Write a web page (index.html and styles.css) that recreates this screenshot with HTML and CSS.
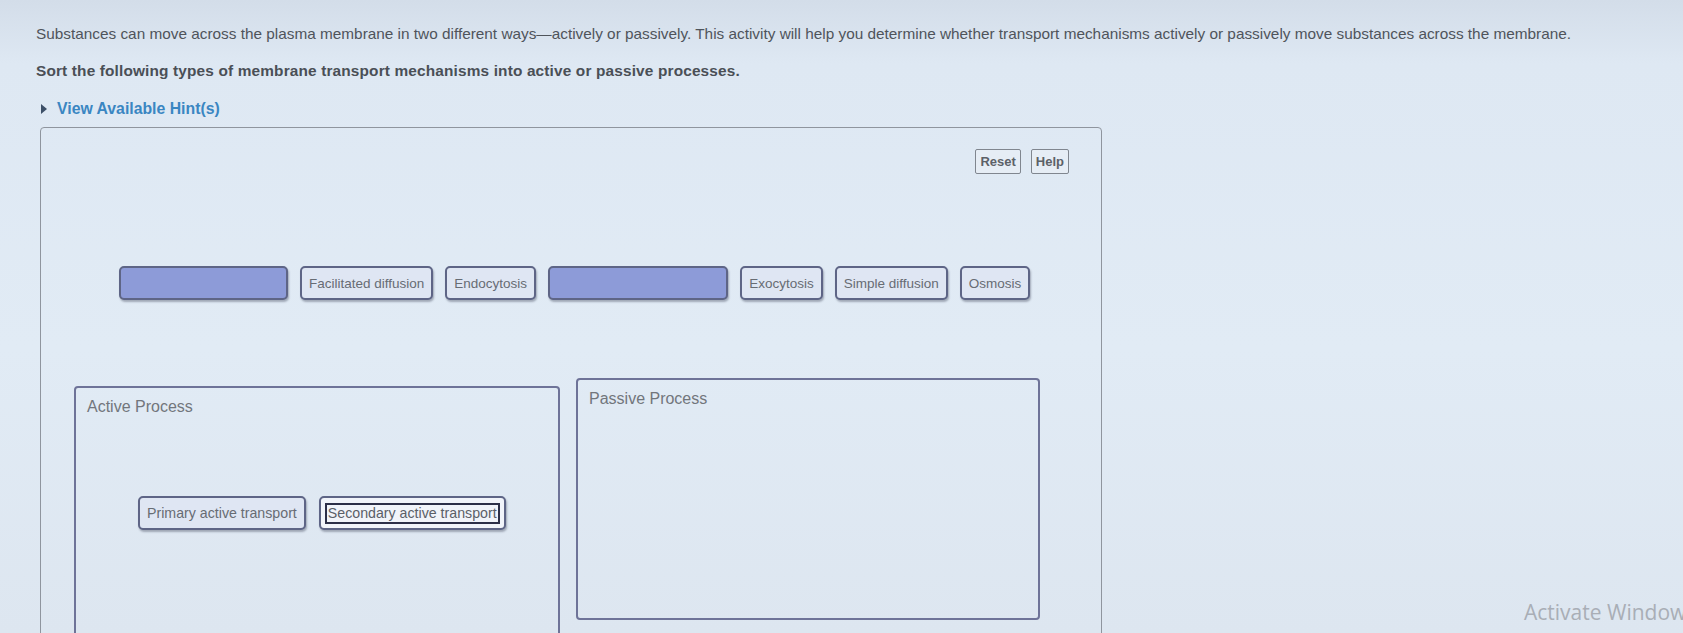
FILE: index.html
```html
<!DOCTYPE html>
<html lang="en">

<head>
    <meta charset="UTF-8">
    <meta name="viewport" content="width=device-width, initial-scale=1.0">
    <title>Membrane Transport Sorting</title>
    <link rel="stylesheet" href="styles.css">
</head>

<body>

    <div class="page">
        <p class="intro">Substances can move across the plasma membrane in two different ways&mdash;actively or passively. This activity will help you determine whether transport mechanisms actively or passively move substances across the membrane.</p>
        <p class="task">Sort the following types of membrane transport mechanisms into active or passive processes.</p>

        <div class="hint-toggle">
            <span class="hint-arrow"></span>
            <span class="hint-text">View Available Hint(s)</span>
        </div>

        <div class="activity">
            <div class="toolbar">
                <button class="tool-btn">Reset</button>
                <button class="tool-btn">Help</button>
            </div>

            <div class="tile-row">
                <div class="tile empty" style="width: 169px;"></div>
                <div class="tile">Facilitated diffusion</div>
                <div class="tile">Endocytosis</div>
                <div class="tile empty" style="width: 180px;"></div>
                <div class="tile">Exocytosis</div>
                <div class="tile">Simple diffusion</div>
                <div class="tile">Osmosis</div>
            </div>

            <div class="zones">
                <div class="zone zone-active">
                    <div class="zone-label">Active Process</div>
                    <div class="zone-tiles">
                        <div class="tile">Primary active transport</div>
                        <div class="tile focused"><span>Secondary active transport</span></div>
                    </div>
                </div>
                <div class="zone zone-passive">
                    <div class="zone-label">Passive Process</div>
                </div>
            </div>
        </div>
    </div>

    <div class="watermark">Activate Windows</div>

</body>

</html>
```

FILE: styles.css
```css
html,
body {
    margin: 0;
    height: 100%;
    overflow: hidden;
}

body {
    font-family: "Liberation Sans", Arial, sans-serif;
    background: linear-gradient(180deg, #d3dde9 0%, #dee8f3 10%, #e1ebf5 55%, #dde6f0 100%);
    color: #555a60;
}

.page {
    padding: 25px 0 0 36px;
}

.intro {
    margin: 0;
    font-size: 15.35px;
    line-height: 18px;
    color: #4f545b;
}

.task {
    margin: 19px 0 0;
    font-size: 15.4px;
    line-height: 18px;
    letter-spacing: 0.15px;
    font-weight: bold;
    color: #4a4f56;
}

.hint-toggle {
    display: flex;
    align-items: center;
    margin: 20px 0 0 5px;
    height: 18px;
}

.hint-arrow {
    width: 0;
    height: 0;
    border-top: 5px solid transparent;
    border-bottom: 5px solid transparent;
    border-left: 6px solid #3d5068;
    margin-right: 10px;
}

.hint-text {
    font-size: 15.8px;
    font-weight: bold;
    color: #3a86c2;
}

.activity {
    margin: 9px 0 0 4px;
    width: 1062px;
    height: 560px;
    border: 1px solid #8f959e;
    border-radius: 4px;
    box-sizing: border-box;
}

.toolbar {
    display: flex;
    justify-content: flex-end;
    gap: 10px;
    padding: 21px 32px 0 0;
}

.tool-btn {
    font-family: "Liberation Sans", Arial, sans-serif;
    font-size: 13px;
    font-weight: bold;
    color: #5c6168;
    background: #e6edf5;
    border: 1px solid #80868f;
    border-radius: 2px;
    height: 25px;
    padding: 0 4px;
}

.tile-row {
    display: flex;
    align-items: center;
    gap: 12px;
    padding: 92px 0 0 78px;
}

.tile {
    height: 34px;
    box-sizing: border-box;
    padding: 0 7px;
    display: flex;
    align-items: center;
    border: 2px solid #5e6586;
    border-radius: 5px;
    background: #dfe6f3;
    box-shadow: 1px 2px 2px rgba(40, 45, 70, 0.35);
    font-size: 13.5px;
    color: #676c74;
    white-space: nowrap;
}

.tile.empty {
    background: #8d9bd8;
}

.tile.focused {
    padding: 0 4px;
    background: #f1f4fa;
}

.tile.focused span {
    border: 2px solid #2c2f48;
    padding: 0 1px;
    line-height: 17px;
    color: #5b6068;
}

.zones {
    display: flex;
    align-items: flex-start;
    gap: 16px;
    padding: 78px 0 0 33px;
}

.zone {
    border: 2px solid #6e7398;
    border-radius: 4px;
    box-sizing: border-box;
}

.zone-active {
    width: 486px;
    height: 270px;
    margin-top: 8px;
}

.zone-passive {
    width: 464px;
    height: 242px;
}

.zone-label {
    padding: 10px 0 0 11px;
    font-size: 16px;
    color: #72767c;
}

.zone-tiles {
    display: flex;
    gap: 13px;
    padding: 80px 0 0 62px;
}

.zone-tiles .tile {
    font-size: 14.2px;
}

.watermark {
    position: absolute;
    left: 1524px;
    top: 598px;
    font-family: "Open Sans", "Noto Sans", sans-serif;
    font-size: 21px;
    color: #a9aeb6;
    white-space: nowrap;
}
```
